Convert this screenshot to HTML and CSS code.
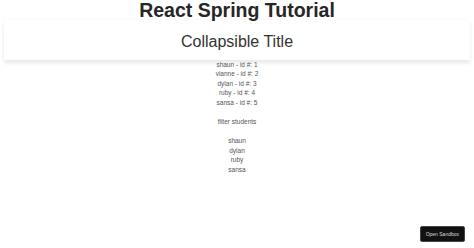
FILE: index.html
```html
<!DOCTYPE html>
<html>
<head>
<meta charset="utf-8">
<link rel="stylesheet" href="styles.css">
</head>
<body>
<div class="app">
  <h1 class="title">React Spring Tutorial</h1>
  <div class="card">
    <div class="card-title">Collapsible Title</div>
  </div>
  <ul class="list">
    <li>shaun - id #: 1</li>
    <li>vianne - id #: 2</li>
    <li>dylan - id #: 3</li>
    <li>ruby - id #: 4</li>
    <li>sansa - id #: 5</li>
  </ul>
  <p class="filter">filter students</p>
  <ul class="list">
    <li>shaun</li>
    <li>dylan</li>
    <li>ruby</li>
    <li>sansa</li>
  </ul>
</div>
<button class="sandbox">Open Sandbox</button>
</body>
</html>
```
FILE: styles.css
```css
html, body {
  margin: 0;
  padding: 0;
  background: #fff;
}
body {
  font-family: "Liberation Sans", Arial, sans-serif;
  color: #333;
}
.app {
  text-align: center;
}
.title {
  margin: 0;
  font-size: 19.5px;
  line-height: 20px;
  font-weight: bold;
  color: #262626;
}
.card {
  margin: 0 4px;
  height: 40px;
  padding-top: 3px;
  box-sizing: border-box;
  display: flex;
  align-items: center;
  justify-content: center;
  box-shadow: 0 3px 4px rgba(0,0,0,0.09), 0 -1px 2px rgba(0,0,0,0.02);
  background: #fff;
}
.card-title {
  font-size: 16px;
  color: #333;
}
.list {
  list-style: none;
  margin: 0;
  padding: 0;
  font-size: 6.5px;
  line-height: 9.5px;
  color: #555;
}
.list:first-of-type {
  margin-top: -0.5px;
}
.filter {
  margin: 10px 0 9.5px;
  font-size: 6.5px;
  line-height: 9.5px;
  color: #555;
}
.sandbox {
  position: fixed;
  right: 9px;
  bottom: 6px;
  background: #111;
  color: #ddd;
  border: 1px solid #444;
  border-radius: 2px;
  font-family: "Liberation Sans", Arial, sans-serif;
  font-size: 5px;
  padding: 4px 5px;
  line-height: 6px;
}
```
